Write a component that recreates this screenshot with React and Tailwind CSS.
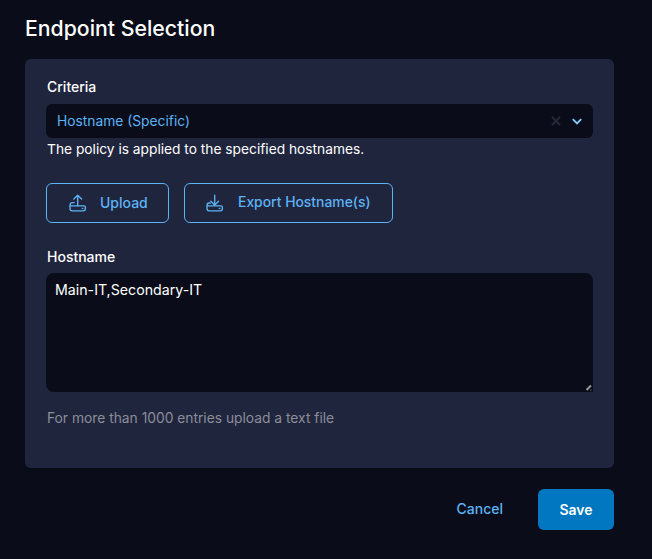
import React from "react";

function UploadIcon() {
  return (
    <svg width="18" height="18" viewBox="0 0 18 18" fill="none" stroke="currentColor" strokeWidth="1.35" strokeLinecap="round" strokeLinejoin="round">
      <path d="M8.7 11.5V1.2M4.8 5L8.7 1.2 12.6 5" />
      <path d="M5.2 8.6H3.2C1.9 8.6 1 9.9 1 11.5v2.7C1 15.7 1.9 16.8 3.2 16.8h11c1.3 0 2.2-1.1 2.2-2.6v-1c0-.9-.6-1.4-1.4-1.4H1.4" />
      <path d="M13.2 14.3h.6" />
    </svg>
  );
}

function DownloadIcon() {
  return (
    <svg width="18" height="18" viewBox="0 0 18 18" fill="none" stroke="currentColor" strokeWidth="1.35" strokeLinecap="round" strokeLinejoin="round">
      <path d="M8.7 1.2V11M4.8 7.2L8.7 11l3.9-3.8" />
      <path d="M4.2 9H3.2C1.9 9 1 10.2 1 11.7v2.5c0 1.5.9 2.6 2.2 2.6h11c1.3 0 2.2-1.1 2.2-2.6v-1c0-.9-.6-1.4-1.4-1.4H1.4" />
      <path d="M13.2 14.3h.6" />
    </svg>
  );
}

export default function App() {
  return (
    <div className="w-[652px] h-[559px] overflow-hidden bg-[#0a0d19] pl-[25px] pr-[38px] font-['Inter',sans-serif] flex flex-col">
      <h1 className="h-[59px] pt-[14px] text-[21.25px] leading-[28px] font-medium text-white">Endpoint Selection</h1>

      <div className="h-[409px] rounded-[6px] bg-[#20253e] px-[21px] pt-[19px] flex flex-col">
        <label className="h-[26px] pl-[1px] text-[14px] leading-[17px] font-medium text-white">Criteria</label>
        <div className="h-[34px] rounded-[6px] bg-[#0a0d19] pl-[11px] pr-[11px] flex items-center justify-between">
          <span className="text-[13.8px] text-[#5cb3f5]">Hostname (Specific)</span>
          <div className="flex items-center gap-[11px]">
            <svg width="10" height="10" viewBox="0 0 10 10" fill="none" stroke="#262a38" strokeWidth="1.8">
              <path d="M1 1l8 8M9 1l-8 8" />
            </svg>
            <svg width="10" height="7" viewBox="0 0 10 7" fill="none" stroke="#85cbfd" strokeWidth="1.9">
              <path d="M.8 1.2L5 5.4l4.2-4.2" />
            </svg>
          </div>
        </div>
        <p className="mt-[1px] h-[44px] pl-[1px] text-[13.75px] leading-[20px] text-white">The policy is applied to the specified hostnames.</p>

        <div className="flex gap-[15px]">
          <button className="w-[123px] h-[40px] rounded-[6px] border border-[#5cb3f5] text-[#5cb3f5] flex items-center pl-[22px] gap-[13px] text-[14px] font-medium">
            <UploadIcon />
            <span className="-mt-[2px]">Upload</span>
          </button>
          <button className="w-[209px] h-[40px] rounded-[6px] border border-[#5cb3f5] text-[#5cb3f5] flex items-center pl-[21px] gap-[14px] text-[13.9px] font-medium">
            <DownloadIcon />
            <span className="-mt-[2px]">Export Hostname(s)</span>
          </button>
        </div>

        <label className="mt-[25px] h-[25px] pl-[1px] text-[14px] leading-[17px] font-medium text-white">Hostname</label>
        <div className="relative h-[119px]">
          <textarea
            className="block h-full w-full rounded-[8px] bg-[#0a0d19] px-[9px] py-[7px] text-[14.2px] leading-[20px] text-white outline-none resize-y"
            defaultValue="Main-IT,Secondary-IT"
          />
          <svg className="absolute right-0 bottom-0 pointer-events-none" width="12" height="12" viewBox="0 0 12 12">
            <rect width="12" height="12" fill="#0a0d19" />
            <path d="M5.5 10L10 5.5" stroke="#9a9a9a" strokeWidth="2" />
            <path d="M9.5 10.2h.8" stroke="#9a9a9a" strokeWidth="1.2" />
          </svg>
        </div>
        <p className="mt-[16px] pl-[1px] text-[13.8px] leading-[20px] text-[#8b8d98]">For more than 1000 entries upload a text file</p>
      </div>

      <div className="mt-[21px] flex items-center justify-end">
        <button className="mr-[35px] -mt-[2px] text-[14px] font-medium text-[#5cb3f5]">Cancel</button>
        <button className="w-[76px] h-[41px] rounded-[6px] bg-[#0077c0] text-[14px] font-semibold text-white">Save</button>
      </div>
    </div>
  );
}
